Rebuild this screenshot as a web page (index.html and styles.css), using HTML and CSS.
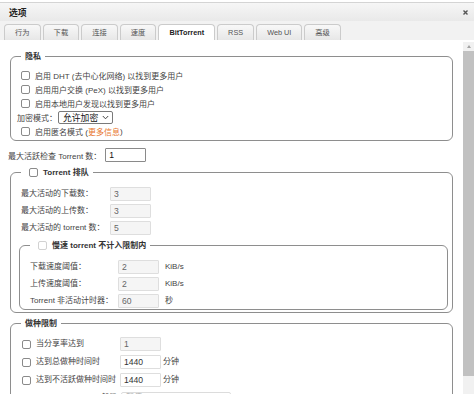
FILE: index.html
```html
<!DOCTYPE html>
<html lang="zh-CN">
<head>
    <meta charset="UTF-8">
    <title>选项</title>
    <link rel="stylesheet" href="styles.css">
</head>
<body>
    <div class="window">
        <div class="titlebar">
            <span class="title">选项</span>
            <span class="close">
                <svg width="5" height="5" viewBox="0 0 5 5"><path d="M0.5 0.5L4.5 4.5M4.5 0.5L0.5 4.5" stroke="#555" stroke-width="1.4"/></svg>
            </span>
        </div>

        <div class="tabs">
            <div class="tab">行为</div>
            <div class="tab">下载</div>
            <div class="tab">连接</div>
            <div class="tab">速度</div>
            <div class="tab active">BitTorrent</div>
            <div class="tab">RSS</div>
            <div class="tab">Web UI</div>
            <div class="tab">高级</div>
        </div>

        <div class="main">
            <div class="pane">
                <fieldset class="group privacy">
                    <legend>隐私</legend>
                    <div class="row"><input type="checkbox">启用 DHT (去中心化网络) 以找到更多用户</div>
                    <div class="row"><input type="checkbox">启用用户交换 (PeX) 以找到更多用户</div>
                    <div class="row"><input type="checkbox">启用本地用户发现以找到更多用户</div>
                    <div class="row">加密模式：<span class="select">允许加密<svg width="7" height="5" viewBox="0 0 7 5"><path d="M0.8 1L3.5 3.8L6.2 1" fill="none" stroke="#333" stroke-width="0.9"/></svg></span></div>
                    <div class="row"><input type="checkbox">启用匿名模式 (<a class="more">更多信息</a>)</div>
                </fieldset>

                <div class="field-line">最大活跃检查 Torrent 数：<input class="num on" type="text" value="1"></div>

                <fieldset class="group queue">
                    <legend><input type="checkbox">Torrent 排队</legend>
                    <div class="grid">
                        <span>最大活动的下载数：</span><input class="num" type="text" value="3" disabled>
                        <span>最大活动的上传数：</span><input class="num" type="text" value="3" disabled>
                        <span>最大活动的 torrent 数：</span><input class="num" type="text" value="5" disabled>
                    </div>

                    <fieldset class="group nested">
                        <legend><input type="checkbox" disabled>慢速 torrent 不计入限制内</legend>
                        <div class="grid">
                            <span>下载速度阈值：</span><input class="num" type="text" value="2" disabled><span class="unit">KiB/s</span>
                            <span>上传速度阈值：</span><input class="num" type="text" value="2" disabled><span class="unit">KiB/s</span>
                            <span>Torrent 非活动计时器：</span><input class="num" type="text" value="60" disabled><span class="unit">秒</span>
                        </div>
                    </fieldset>
                </fieldset>

                <fieldset class="group seeding">
                    <legend>做种限制</legend>
                    <div class="grid">
                        <span class="check"><input type="checkbox">当分享率达到</span><input class="num" type="text" value="1" disabled><span></span>
                        <span class="check"><input type="checkbox">达到总做种时间时</span><input class="num soft" type="text" value="1440"><span class="unit">分钟</span>
                        <span class="check"><input type="checkbox">达到不活跃做种时间时</span><input class="num soft" type="text" value="1440"><span class="unit">分钟</span>
                        <span class="then">然后</span><span class="select off">暂停 torrent</span><span></span>
                    </div>
                </fieldset>
            </div>

            <div class="scrollbar">
                <div class="up"><span class="arrow"></span></div>
                <div class="thumb"></div>
            </div>
        </div>
    </div>
</body>
</html>
```

FILE: styles.css
```css
* {
    box-sizing: border-box;
}

body {
    margin: 0;
    width: 474px;
    height: 394px;
    overflow: hidden;
    background: #fff;
    font-family: "Liberation Sans", "Noto Sans CJK SC", sans-serif;
    font-size: 8px;
    color: #444;
}

.window {
    height: 394px;
    display: flex;
    flex-direction: column;
}

/* title bar */
.titlebar {
    margin-top: 2px;
    height: 19px;
    border-top: 1px solid #d4d4d4;
    background: linear-gradient(#f6f6f6, #e9e9e9);
    display: flex;
    align-items: center;
    justify-content: space-between;
    padding: 0 6px 0 9px;
}

.title {
    font-size: 8.8px;
    font-weight: bold;
    color: #222;
}

.close {
    display: flex;
}

/* tabs */
.tabs {
    height: 19px;
    background: #f2f2f2;
    display: flex;
    align-items: flex-end;
    gap: 2px;
    padding-left: 4px;
}

.tab {
    height: 16px;
    padding: 0 10px;
    border: 1px solid #cbcbcb;
    border-bottom: none;
    border-radius: 4px 4px 0 0;
    background: linear-gradient(#f8f8f8, #e7e7e7);
    font-size: 7.3px;
    line-height: 15px;
    color: #555;
}

.tab.active {
    background: #fff;
    font-weight: bold;
    color: #222;
}

/* content */
.main {
    flex: 1;
    display: flex;
    min-height: 0;
}

.pane {
    flex: 1;
    overflow: hidden;
    padding: 10px 8px 0 8px;
}

.group {
    margin: 0 2px;
    border: 1px solid #8e8e8e;
    border-radius: 6px;
    min-width: 0;
}

legend {
    display: flex;
    align-items: center;
    padding: 0 4px;
    line-height: 13px;
    font-weight: bold;
    color: #333;
}

input[type="checkbox"] {
    appearance: none;
    width: 9px;
    height: 9px;
    margin: 0 5px 0 4px;
    border: 1px solid #8a8a8a;
    border-radius: 2px;
    background: #fff;
    flex: none;
}

input[type="checkbox"]:disabled {
    border-color: #d2d2d2;
}

.row {
    display: flex;
    align-items: center;
    height: 14px;
}

.privacy {
    padding: 5px 6px 2px 6px;
}

.privacy legend {
    margin-left: 4px;
}

.select {
    display: inline-flex;
    align-items: center;
    justify-content: space-between;
    width: 55px;
    height: 13px;
    margin-left: 1px;
    padding: 0 3px 0 4px;
    border: 1px solid #7a7a7a;
    border-radius: 2px;
    font-size: 8.8px;
    color: #111;
}

.select.off {
    width: 110px;
    font-size: 8px;
    color: #aaa;
    border-color: #dcdcdc;
}

.more {
    color: #e8772e;
}

.field-line {
    display: flex;
    align-items: center;
    height: 14px;
    margin-top: 7px;
}

.num {
    width: 41px;
    height: 14px;
    margin: 0;
    padding: 0 3px;
    border: 1px solid #dedede;
    border-radius: 1px;
    background: #f5f5f5;
    font-family: inherit;
    font-size: 8.6px;
    color: #666;
}

.num.on {
    margin-left: 4px;
    border-color: #8a8a8a;
    background: #fff;
    color: #111;
}

.num.soft {
    background: #fff;
    color: #333;
}

.grid {
    display: grid;
    align-items: center;
    grid-auto-rows: 14px;
    line-height: 14px;
    white-space: nowrap;
}

/* torrent queue */
.queue {
    margin-top: 4px;
    padding: 7.5px 4px 2px 8px;
}

.queue legend {
    margin-left: 2px;
}

.queue > .grid {
    grid-template-columns: 89px 41px;
    row-gap: 3px;
    margin-left: 2px;
}

.nested {
    margin: 4.5px 0 0 0;
    padding: 7.5px 10px 1.5px 10px;
}

.nested legend {
    margin-left: 0;
}

.nested .grid {
    grid-template-columns: 88px 41px auto;
    row-gap: 3px;
    margin-left: 0;
}

.unit {
    margin-left: 6px;
}

/* seeding */
.seeding {
    margin-top: 4px;
    padding: 7px 6px 0 7px;
}

.seeding legend {
    margin-left: 3px;
}

.seeding .grid {
    grid-template-columns: 102px 42px auto;
    row-gap: 4px;
}

.seeding .unit {
    margin-left: 1px;
}

.check {
    display: flex;
    align-items: center;
}

.then {
    text-align: right;
    padding-right: 3px;
}

/* scrollbar */
.scrollbar {
    width: 11px;
    margin-top: 2px;
    background: #f1f1f1;
}

.up {
    height: 9px;
    display: flex;
    justify-content: center;
    align-items: center;
}

.arrow {
    width: 0;
    height: 0;
    border-left: 2.5px solid transparent;
    border-right: 2.5px solid transparent;
    border-bottom: 3px solid #a3a3a3;
}

.thumb {
    height: 325px;
    background: #c1c1c1;
}
```
